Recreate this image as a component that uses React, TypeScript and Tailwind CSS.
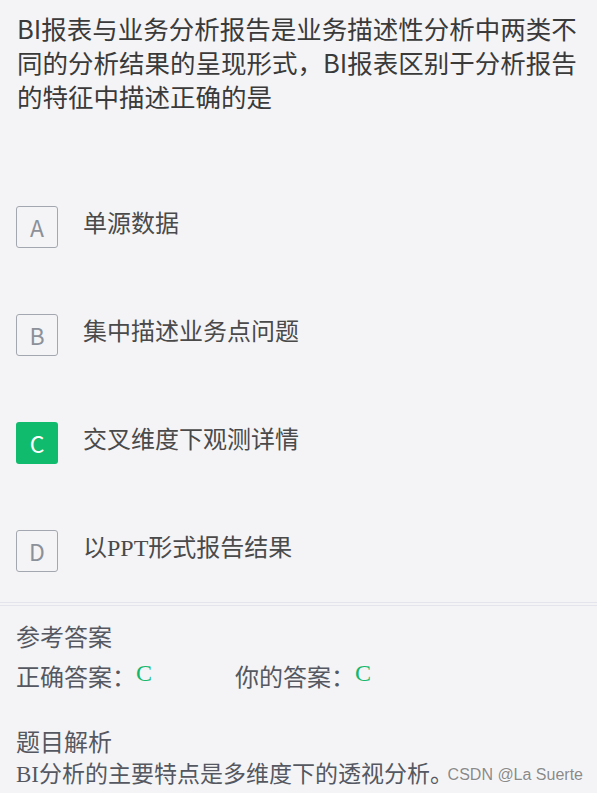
import React from "react";

const sans = "font-['Noto_Sans_CJK_SC','Noto_Sans',sans-serif]";
const serifMix = "font-['Liberation_Serif','Noto_Sans_CJK_SC',serif]";

type Opt = { key: string; text: string; selected?: boolean };

const options: Opt[] = [
  { key: "A", text: "单源数据" },
  { key: "B", text: "集中描述业务点问题" },
  { key: "C", text: "交叉维度下观测详情", selected: true },
  { key: "D", text: "以PPT形式报告结果" },
];

export default function App() {
  return (
    <div className="relative w-[597px] h-[793px] overflow-hidden bg-[#f4f4f7]">
      <div className={`px-[17px] pt-[11px] text-[25.5px] leading-[34px] text-[#3a3a3a] ${sans}`}>
        BI报表与业务分析报告是业务描述性分析中两类不同的分析结果的呈现形式，BI报表区别于分析报告的特征中描述正确的是
      </div>

      <div className="mt-[60px] flex flex-col">
        {options.map((o, i) => (
          <div
            key={o.key}
            className={`flex items-center px-[16px] ${i === 3 ? "h-[105px] pt-[3px]" : "h-[108px]"}`}
          >
            {o.selected ? (
              <div className={`flex h-[42px] w-[42px] items-center justify-center rounded-[3px] bg-[#10bb6d] text-[23px] text-white ${sans}`}>
                {o.key}
              </div>
            ) : (
              <div className={`flex h-[42px] w-[42px] items-center justify-center rounded-[3px] border border-[#a3a7af] text-[23px] text-[#8b9099] ${sans}`}>
                {o.key}
              </div>
            )}
            <div className={`ml-[25px] mb-[6px] text-[24px] leading-[34px] text-[#4a4a4a] ${serifMix}`}>
              {o.text}
            </div>
          </div>
        ))}
      </div>

      <div className="border-t border-[#e4e4ec]" />
      <div className="mt-[2px] border-t border-[#e4e4ec]" />

      <div className="px-[16px] pt-[10px]">
        <div className={`h-[40px] flex items-center text-[24px] text-[#555860] ${sans}`}>参考答案</div>
        <div className="h-[40px] flex items-center text-[24px]">
          <div className="flex w-[219px] items-center">
            <span className={`text-[#555860] ${sans}`}>正确答案：</span>
            <span className="font-['Liberation_Serif',serif] text-[#14b86c] -mt-[6px]">C</span>
          </div>
          <div className="flex items-center">
            <span className={`text-[#555860] ${sans}`}>你的答案：</span>
            <span className="font-['Liberation_Serif',serif] text-[#14b86c] -mt-[6px]">C</span>
          </div>
        </div>
        <div className={`mt-[28px] h-[34px] flex items-center text-[24px] text-[#555860] ${sans}`}>题目解析</div>
        <div className={`h-[34px] flex items-center text-[23px] text-[#555860] ${serifMix}`}>
          BI分析的主要特点是多维度下的透视分析。
        </div>
      </div>

      <div className="absolute right-[14px] bottom-[6px] font-['Liberation_Sans',sans-serif] text-[16px] text-[#8a8a8a] [text-shadow:0_0_2px_#ffffff]">
        CSDN @La Suerte
      </div>
    </div>
  );
}
